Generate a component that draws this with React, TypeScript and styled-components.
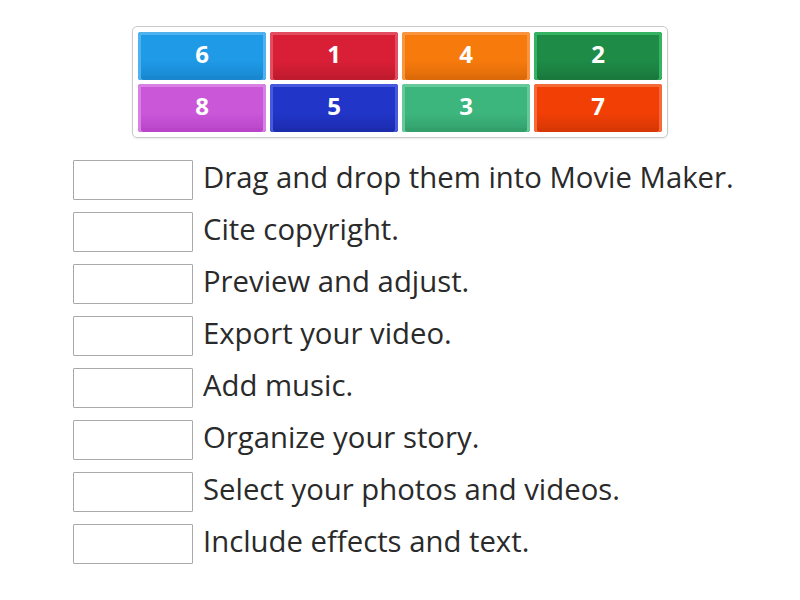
import React from "react";
import styled, { createGlobalStyle } from "styled-components";

const Global = createGlobalStyle`
  html, body { margin: 0; padding: 0; background: #ffffff; }
  body { font-family: "Open Sans", "Liberation Sans", sans-serif; }
`;

const Page = styled.div`
  width: 800px;
  height: 600px;
  display: flex;
  flex-direction: column;
  align-items: center;
  padding-top: 26px;
  box-sizing: border-box;
`;

const Tray = styled.div`
  display: grid;
  grid-template-columns: repeat(4, 128px);
  grid-auto-rows: 48px;
  gap: 4px 4px;
  padding: 5px;
  border: 1px solid #c9c9c9;
  border-radius: 5px;
  box-shadow: 0 1px 2px rgba(0, 0, 0, 0.08);
`;

const Tile = styled.div<{ $bg: string; $light: string; $dark: string }>`
  display: flex;
  align-items: center;
  justify-content: center;
  border-radius: 3px;
  background: linear-gradient(${(p) => p.$bg}, ${(p) => p.$bg} 60%, ${(p) => p.$dark});
  box-shadow: inset 0 3px 0 ${(p) => p.$light}, inset 3px 0 0 ${(p) => p.$light},
    inset -3px 0 0 ${(p) => p.$light}, inset 0 -4px 0 ${(p) => p.$dark};
  color: #ffffff;
  font-weight: 700;
  font-size: 24px;
  line-height: 1;
  padding-bottom: 5px;
  box-sizing: border-box;
`;

const List = styled.div`
  align-self: stretch;
  display: flex;
  flex-direction: column;
  gap: 12px;
  padding-left: 73px;
  margin-top: 22px;
`;

const Row = styled.div`
  display: flex;
  align-items: center;
  height: 40px;
`;

const Slot = styled.div`
  width: 120px;
  height: 40px;
  box-sizing: border-box;
  border: 1px solid #a9a9a9;
  border-radius: 1px;
  background: #ffffff;
  flex-shrink: 0;
`;

const Label = styled.span`
  margin-left: 10px;
  font-size: 29.3px;
  color: #2a2a2a;
  line-height: 1;
  padding-bottom: 4px;
  white-space: nowrap;
`;

const tiles = [
  { n: "6", bg: "#1f9ae6", light: "#4fb2ee", dark: "#1887cf" },
  { n: "1", bg: "#d91f36", light: "#e24d60", dark: "#bf1a2e" },
  { n: "4", bg: "#f77a0d", light: "#f99540", dark: "#dc6a08" },
  { n: "2", bg: "#1e8b47", light: "#35b262", dark: "#1a783d" },
  { n: "8", bg: "#c957d8", light: "#d880e3", dark: "#b944c8" },
  { n: "5", bg: "#2135c8", light: "#4759dc", dark: "#1c2cae" },
  { n: "3", bg: "#3db67d", light: "#66c99a", dark: "#33a06c" },
  { n: "7", bg: "#f23f06", light: "#f66a3a", dark: "#d63705" },
];

const items = [
  "Drag and drop them into Movie Maker.",
  "Cite copyright.",
  "Preview and adjust.",
  "Export your video.",
  "Add music.",
  "Organize your story.",
  "Select your photos and videos.",
  "Include effects and text.",
];

export default function App() {
  return (
    <>
      <Global />
      <Page>
        <Tray>
          {tiles.map((t) => (
            <Tile key={t.n} $bg={t.bg} $light={t.light} $dark={t.dark}>
              {t.n}
            </Tile>
          ))}
        </Tray>
        <List>
          {items.map((it) => (
            <Row key={it}>
              <Slot />
              <Label>{it}</Label>
            </Row>
          ))}
        </List>
      </Page>
    </>
  );
}
